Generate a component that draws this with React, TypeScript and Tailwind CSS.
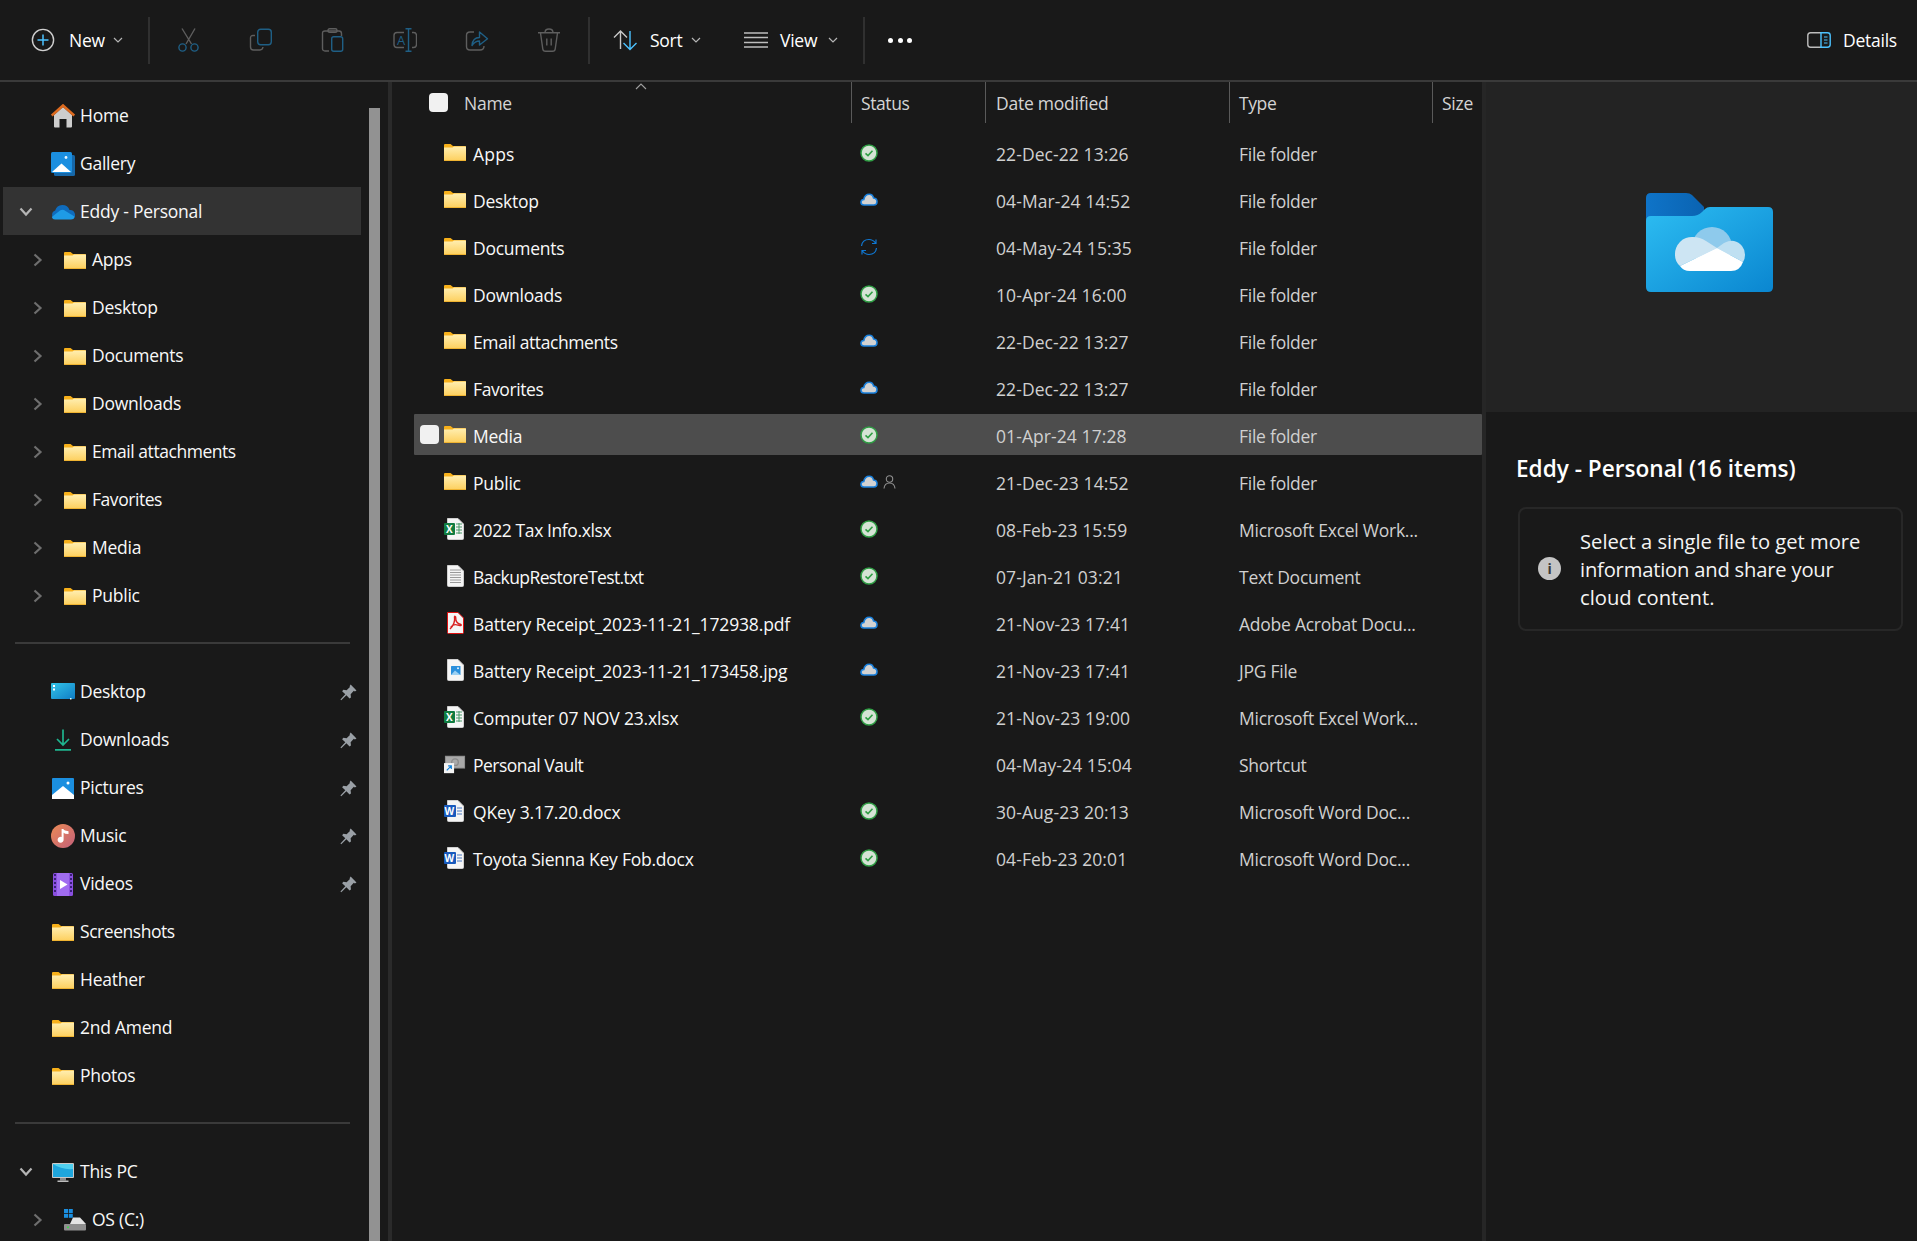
import React from "react";

const BLUE_DIM = "#1f5f85";
const GRAY_DIM = "#5e5e5e";

function Chev({ className = "" }: { className?: string }) {
  return (
    <svg width="10" height="6" viewBox="0 0 10 6" className={className} fill="none" stroke="#b5b5b5" strokeWidth="1.2">
      <path d="M1 1 L5 5 L9 1" />
    </svg>
  );
}

function IconNew() {
  return (
    <svg width="24" height="24" viewBox="0 0 24 24" fill="none">
      <circle cx="12" cy="12" r="10.6" stroke="#cfcfcf" strokeWidth="1.4" />
      <path d="M12 6.5 V17.5 M6.5 12 H17.5" stroke="#4cc2ff" strokeWidth="1.5" />
    </svg>
  );
}
function IconCut() {
  return (
    <svg width="24" height="24" viewBox="0 0 24 24" fill="none" strokeWidth="1.4">
      <path d="M5 0.5 L14.5 16 M18 0.5 L9 16" stroke={GRAY_DIM} />
      <circle cx="5.5" cy="19.5" r="3.6" stroke={BLUE_DIM} />
      <circle cx="17.5" cy="19.5" r="3.6" stroke={BLUE_DIM} />
    </svg>
  );
}
function IconCopy() {
  return (
    <svg width="24" height="24" viewBox="0 0 24 24" fill="none" strokeWidth="1.4">
      <path d="M6 7.5 H4 Q1.5 7.5 1.5 10 V19 Q1.5 22 4.5 22 H11 Q13.5 22 14 19" stroke={GRAY_DIM} />
      <rect x="8.7" y="1.2" width="13.6" height="15.6" rx="3" stroke={BLUE_DIM} />
    </svg>
  );
}
function IconPaste() {
  return (
    <svg width="24" height="24" viewBox="0 0 24 24" fill="none" strokeWidth="1.4">
      <path d="M8 23 H4 Q1.5 23 1.5 20.5 V5.5 Q1.5 3 4 3 H18 Q20.5 3 20.5 5.5 V8" stroke={GRAY_DIM} />
      <rect x="7" y="0.8" width="9" height="3.6" rx="1.6" stroke={GRAY_DIM} />
      <rect x="10.7" y="8.7" width="11" height="14.6" rx="2" stroke={BLUE_DIM} />
    </svg>
  );
}
function IconRename() {
  return (
    <svg width="24" height="24" viewBox="0 0 24 24" fill="none" strokeWidth="1.4">
      <path d="M11 4.5 H4 Q1 4.5 1 7.5 V16.5 Q1 19.5 4 19.5 H11 M19 4.5 H20.5 Q23.5 4.5 23.5 7.5 V16.5 Q23.5 19.5 20.5 19.5 H19" stroke={GRAY_DIM} />
      <path d="M15.5 0.7 V23.3 M12.5 0.7 H18.5 M12.5 23.3 H18.5" stroke={BLUE_DIM} />
      <text x="3.9" y="16.8" fontSize="13" fill={BLUE_DIM} fontFamily="Open Sans, sans-serif">A</text>
    </svg>
  );
}
function IconShare() {
  return (
    <svg width="24" height="24" viewBox="0 0 24 24" fill="none" strokeWidth="1.4">
      <path d="M9 4 H5 Q1.5 4 1.5 7.5 V18.5 Q1.5 22 5 22 H15 Q19 22 19 18" stroke={GRAY_DIM} />
      <path d="M7 17.5 C7.5 11.5 11 9.5 14.5 9.5 V4 L22.5 10.8 L14.5 17 V13 C11.5 13 9 14.5 7 17.5 Z" stroke={BLUE_DIM} strokeLinejoin="round" />
    </svg>
  );
}
function IconDelete() {
  return (
    <svg width="24" height="24" viewBox="0 0 24 24" fill="none" strokeWidth="1.4" stroke={GRAY_DIM}>
      <path d="M1 4.7 H23 M8 4.7 Q8 1 12 1 Q16 1 16 4.7 M3.5 5 L5.8 21 Q6 23.2 8.5 23.2 H15.5 Q18 23.2 18.2 21 L20.5 5" />
      <path d="M9.8 10.5 V17.5 M14.2 10.5 V17.5" />
    </svg>
  );
}
function IconSort() {
  return (
    <svg width="24" height="24" viewBox="0 0 24 24" fill="none" strokeWidth="1.4">
      <path d="M7.5 21 V3 M1 9.5 L7.5 3 L14 9.5" stroke="#c8c8c8" />
      <path d="M17 3 V21.5 M10.5 15 L17 21.5 L23.5 15" stroke="#4cc2ff" />
    </svg>
  );
}
function IconView() {
  return (
    <svg width="24" height="18" viewBox="0 0 24 18" fill="none" strokeWidth="1.6" stroke="#bdbdbd">
      <path d="M0 2 H24 M0 6.5 H24 M0 11.5 H24 M0 16 H24" />
    </svg>
  );
}
function IconDetails() {
  return (
    <svg width="24" height="16" viewBox="0 0 24 16" fill="none" strokeWidth="1.4">
      <path d="M14 0.8 H3.5 Q0.8 0.8 0.8 3.5 V12.5 Q0.8 15.2 3.5 15.2 H14" stroke="#bdbdbd" />
      <path d="M14 0.8 H20.5 Q23.2 0.8 23.2 3.5 V12.5 Q23.2 15.2 20.5 15.2 H14 Z" stroke="#4cc2ff" />
      <path d="M17 5 H20.5 M17 8 H20.5 M17 11 H20.5" stroke="#4cc2ff" strokeWidth="1" />
    </svg>
  );
}

function Folder() {
  return (
    <svg width="22" height="17" viewBox="0 0 22 17">
      <defs>
        <linearGradient id="fy" x1="0" y1="0" x2="0" y2="1">
          <stop offset="0" stopColor="#ffeeb0" />
          <stop offset="1" stopColor="#fdcf5c" />
        </linearGradient>
      </defs>
      <path d="M0 1 Q0 0 1 0 H6.5 L9 2 H21 Q22 2 22 3 V5 H0 Z" fill="#f7b01a" />
      <path d="M0 3.5 H8.5 L10 2.6 H22 V16 Q22 17 21 17 H1 Q0 17 0 16 Z" fill="url(#fy)" />
      <rect x="0" y="16" width="22" height="1" fill="#efb331" />
    </svg>
  );
}
function Page({ children, border = "#cfcfcf" }: { children?: React.ReactNode; border?: string }) {
  return (
    <svg width="22" height="22" viewBox="0 0 22 22">
      <path d="M3.5 0.5 H14 L19.5 6 V20.5 Q19.5 21.5 18.5 21.5 H4.5 Q3.5 21.5 3.5 20.5 Z" fill="#f5f5f5" stroke={border} />
      {children}
    </svg>
  );
}
function Excel() {
  return (
    <Page>
      <path d="M12 6 H18 M12 9 H18 M12 12 H18 M12 15 H18 M15 5 V16" stroke="#4a9b6b" strokeWidth="1" />
      <rect x="0" y="5" width="11" height="12" rx="1" fill="#107c41" />
      <text x="2" y="14.5" fontSize="10" fontWeight="700" fill="#fff" fontFamily="Open Sans, sans-serif">X</text>
    </Page>
  );
}
function Word() {
  return (
    <Page>
      <path d="M13 8 H18 M13 11 H18 M13 14 H18" stroke="#4a78c0" strokeWidth="1" />
      <rect x="0" y="5" width="12" height="12" rx="1" fill="#185abd" />
      <text x="0.6" y="14.5" fontSize="10" fontWeight="700" fill="#fff" fontFamily="Open Sans, sans-serif">W</text>
    </Page>
  );
}
function Txt() {
  return (
    <Page>
      <path d="M6 5 H17 M6 7.5 H17 M6 10 H17 M6 12.5 H17 M6 15 H17 M6 17.5 H17" stroke="#9a9a9a" strokeWidth="1" />
    </Page>
  );
}
function Pdf() {
  return (
    <Page border="#e01010">
      <path d="M6 17 C9 14 11 9 10.5 5.5 C10 3.5 12 4 11.8 6 C11.6 9 13 11.5 17 12.5 C18 13.5 16 14 14 13.2 C11.5 12.3 8.5 13 6.8 15" fill="none" stroke="#d81e1e" strokeWidth="1.3" />
    </Page>
  );
}
function Jpg() {
  return (
    <Page>
      <rect x="7" y="7" width="9.5" height="9" rx="0.5" fill="#2a8fdc" />
      <path d="M7 16 L11 11.5 L16.5 16 Z" fill="#9bd0f3" />
      <circle cx="14" cy="9.3" r="1" fill="#e4f3ff" />
    </Page>
  );
}
function Vault() {
  return (
    <svg width="24" height="20" viewBox="0 0 24 20">
      <rect x="1" y="1" width="22" height="14" fill="#8a8a8a" />
      <rect x="2" y="2" width="20" height="12" fill="#a9a9a9" />
      <circle cx="12" cy="8" r="3.6" fill="none" stroke="#8a8a8a" strokeWidth="1.4" />
      <rect x="0" y="9" width="11" height="11" fill="#f4f4f4" />
      <path d="M3 17 L8 12 M4.5 12 H8 V15.5" stroke="#1280d8" strokeWidth="1.3" fill="none" />
    </svg>
  );
}
function StatusOk() {
  return (
    <svg width="18" height="18" viewBox="0 0 18 18" fill="none">
      <circle cx="9" cy="9" r="8" fill="#d5e3d5" stroke="#2f9e44" strokeWidth="1.5" />
      <path d="M5.5 9.3 L8 11.6 L12.5 6.8" stroke="#2f9e44" strokeWidth="1.6" />
    </svg>
  );
}
function StatusCloud() {
  return (
    <svg width="18" height="13" viewBox="0 0 18 13" fill="none">
      <path d="M4 12 Q1 12 1 9.3 Q1 6.8 3.8 6.5 Q4.8 1.2 9.3 1.2 Q12.6 1.2 13.6 5 Q17 5.4 17 8.7 Q17 12 13.8 12 Z" fill="#d2d2d2" stroke="#1a80dc" strokeWidth="1.6" />
    </svg>
  );
}
function StatusSync() {
  return (
    <svg width="18" height="18" viewBox="0 0 18 18" fill="none" stroke="#0f78d4" strokeWidth="1.2">
      <path d="M1.5 8 C2 4 5 1.5 9 1.5 C12 1.5 14 3 15.5 5 M16 1.5 V5.5 H12" />
      <path d="M16.5 10 C16 14 13 16.5 9 16.5 C6 16.5 4 15 2.5 13 M2 16.5 V12.5 H6" />
    </svg>
  );
}
function Person() {
  return (
    <svg width="13" height="14" viewBox="0 0 13 14" fill="none" stroke="#8f8f8f" strokeWidth="1.1">
      <circle cx="6.5" cy="4" r="3.2" />
      <path d="M1 13.5 Q1.5 8 6.5 8 Q11.5 8 12 13.5" />
    </svg>
  );
}

function NavHome() {
  return (
    <svg width="24" height="24" viewBox="0 0 24 24">
      <path d="M3 11 L12 3 L21 11 V22.5 Q21 23.5 20 23.5 H15.5 V15 H8.5 V23.5 H4 Q3 23.5 3 22.5 Z" fill="#cdcdcd" />
      <path d="M0.7 11.5 L12 1.5 L23.3 11.5" fill="none" stroke="#dd6a1f" strokeWidth="2.6" />
    </svg>
  );
}
function NavGallery() {
  return (
    <svg width="24" height="24" viewBox="0 0 24 24">
      <rect x="3" y="3" width="21" height="21" rx="1.5" fill="#1667a8" />
      <rect x="0" y="0" width="21" height="21" rx="1.5" fill="#1b8fe0" />
      <path d="M1 20 L10.5 11.5 L20 20 Z" fill="#fff" />
      <circle cx="15" cy="5.5" r="1.4" fill="#e8f6ff" />
    </svg>
  );
}
function NavCloud() {
  return (
    <svg width="24" height="16" viewBox="0 0 24 16">
      <path d="M4 15 A4.5 4.5 0 0 1 4.2 6.5 A7.5 7.5 0 0 1 18.5 6 A5 5 0 0 1 22 15 Z" fill="#0f6cbd" />
      <path d="M9 6.5 Q12 5 14.5 7 L23.5 12.5 Q23.3 15.5 20 15.5 H4 Q1.5 15.5 0.8 13 Z" fill="#1e9be6" />
    </svg>
  );
}
function NavDesktop() {
  return (
    <svg width="24" height="18" viewBox="0 0 24 18">
      <defs>
        <linearGradient id="dg" x1="0" y1="0" x2="1" y2="1">
          <stop offset="0" stopColor="#33c4e8" />
          <stop offset="1" stopColor="#0f7cc4" />
        </linearGradient>
      </defs>
      <rect width="24" height="16" y="0" rx="1" fill="url(#dg)" />
      <rect x="2" y="2" width="2" height="2" fill="#fff" />
      <rect x="2" y="5.5" width="2" height="2" fill="#fff" />
      <rect x="19" y="15" width="1.5" height="1.5" fill="#dff" />
    </svg>
  );
}
function NavDownload() {
  return (
    <svg width="18" height="22" viewBox="0 0 18 22" fill="none" stroke="#1fb58f" strokeWidth="1.7">
      <path d="M9 0.5 V16 M3 10 L9 16 L15 10 M1 20.8 H17" />
    </svg>
  );
}
function NavPictures() {
  return (
    <svg width="22" height="21" viewBox="0 0 22 21">
      <rect width="22" height="21" rx="1" fill="#1b8fe0" />
      <path d="M0 21 L0 17 L11 8 L22 17 V21 Z" fill="#fff" />
      <circle cx="16" cy="5" r="1.5" fill="#fff" />
    </svg>
  );
}
function NavMusic() {
  return (
    <svg width="24" height="24" viewBox="0 0 24 24">
      <defs>
        <linearGradient id="mg" x1="0" y1="0" x2="1" y2="1">
          <stop offset="0" stopColor="#ea8a55" />
          <stop offset="1" stopColor="#c3607a" />
        </linearGradient>
      </defs>
      <circle cx="12" cy="12" r="12" fill="url(#mg)" />
      <path d="M12.6 5 V15.5 A3 3 0 1 1 10.6 13 V5 Z" fill="#fff" />
      <path d="M11 5 Q14 7 17.5 7.2 V10 Q14 10 12 8.5 Z" fill="#fff" />
    </svg>
  );
}
function NavVideos() {
  return (
    <svg width="20" height="23" viewBox="0 0 20 23">
      <rect width="20" height="23" rx="1.5" fill="#8a4fe0" />
      <rect x="4" y="0" width="12" height="23" fill="#a06cf0" />
      <path d="M1 2 H3 M1 6 H3 M1 10 H3 M1 14 H3 M1 18 H3 M17 2 H19 M17 6 H19 M17 10 H19 M17 14 H19 M17 18 H19" stroke="#3a1f78" strokeWidth="2" />
      <path d="M7 7 L14.5 11.5 L7 16 Z" fill="#fff" />
    </svg>
  );
}
function NavPC() {
  return (
    <svg width="22" height="19" viewBox="0 0 22 19">
      <rect width="22" height="15" rx="1" fill="#c9c9c9" />
      <rect x="1" y="1" width="20" height="13" fill="#1ea6dd" />
      <path d="M1 1 H21 V6 Q10 7 1 1 Z" fill="#4fd0ef" />
      <rect x="8" y="15" width="6" height="2.5" fill="#8c8c8c" />
      <rect x="5.5" y="17.5" width="11" height="1.5" fill="#bdbdbd" />
    </svg>
  );
}
function NavDrive() {
  return (
    <svg width="22" height="22" viewBox="0 0 22 22">
      <rect x="0" y="0" width="4" height="4" fill="#1b8fe0" />
      <rect x="4.8" y="0" width="4" height="4" fill="#1b8fe0" />
      <rect x="0" y="4.8" width="4" height="4" fill="#1b8fe0" />
      <rect x="4.8" y="4.8" width="4" height="4" fill="#1b8fe0" />
      <path d="M9 8.5 H16 L22 15 H6 Z" fill="#e4e4e4" />
      <rect x="0" y="15" width="22" height="6.5" rx="1" fill="#8f8f8f" />
      <rect x="3" y="17.5" width="2" height="1.6" fill="#3fd64f" />
    </svg>
  );
}
function Pin() {
  return (
    <svg width="17" height="17" viewBox="0 0 16 16" fill="#9aa0a6">
      <path d="M10 0.5 L15.5 6 L14 7 L13 6.4 L10 9.6 L10.3 12.6 L9 13.6 L6 10.6 L1.2 15.4 L0.4 14.6 L5 9.6 L2 6.8 L3.2 5.5 L6.2 5.8 L9.4 2.9 L9 2 Z" />
    </svg>
  );
}
function CloudFolder() {
  return (
    <svg width="127" height="99" viewBox="0 0 127 99">
      <defs>
        <linearGradient id="bf" x1="0" y1="0" x2="1" y2="1">
          <stop offset="0" stopColor="#2dbdf2" />
          <stop offset="1" stopColor="#0a86d0" />
        </linearGradient>
        <linearGradient id="bt" x1="0" y1="0" x2="1" y2="0">
          <stop offset="0" stopColor="#0f74c8" />
          <stop offset="1" stopColor="#0a63b2" />
        </linearGradient>
      </defs>
      <path d="M0 5 Q0 0 5 0 H40 Q44 0 46 2 L58 14 V30 H0 Z" fill="url(#bt)" />
      <path d="M0 28 Q0 23 5 23 H46 Q52 23 56 19 L59 16 Q61 14 64 14 H122 Q127 14 127 19 V94 Q127 99 122 99 H5 Q0 99 0 94 Z" fill="url(#bf)" />
      <circle cx="66" cy="54" r="20" fill="#8ecaec" />
      <path d="M34 73 A14 14 0 0 1 29 62 A17 17 0 0 1 47 44 Q54 44 60 48 L71 55 Z" fill="#cde5f3" />
      <path d="M71 55 L78 50 Q84 47 88 48 A14 14 0 0 1 99 62 Q99 66 97 69 Z" fill="#bfe0f2" />
      <path d="M71 55 L97 69 Q94 78 85 78 H44 Q37 78 34 73 Z" fill="#fff" />
    </svg>
  );
}

type NavItem = { label: string; icon: React.ReactNode; level?: number; chev?: "r" | "d"; pin?: boolean; selected?: boolean };

function NavChevron({ dir }: { dir: "r" | "d" }) {
  return dir === "d" ? (
    <svg width="14" height="10" viewBox="0 0 14 10" fill="none" stroke="#b5b5b5" strokeWidth="2.2"><path d="M1.5 1.5 L7 7.5 L12.5 1.5" /></svg>
  ) : (
    <svg width="10" height="14" viewBox="0 0 10 14" fill="none" stroke="#6e6e6e" strokeWidth="2.2"><path d="M1.5 1.5 L7.5 7 L1.5 12.5" /></svg>
  );
}

function NavRow({ item }: { item: NavItem }) {
  const tight = item.label === "Email attachments" || item.label === "Screenshots" || item.label === "Favorites";
  return (
    <div className={`flex h-[48px] w-[358px] items-center ${item.selected ? "-mt-[1px] mb-[1px] bg-[#333333] pt-[2px]" : ""} ${item.level ? "pl-[23px]" : "pl-[11px]"}`}>
      <span className="flex w-[24px] items-center justify-center">{item.chev && <NavChevron dir={item.chev} />}</span>
      <span className="ml-[13px] flex w-[24px] items-center justify-center">{item.icon}</span>
      <span className={`ml-[5px] flex-1 pb-[1px] text-[#f8f8f8] ${tight ? "tracking-[-0.45px]" : ""}`}>{item.label}</span>
      {item.pin && <span className="mr-[4px] flex"><Pin /></span>}
    </div>
  );
}

const navTop: NavItem[] = [
  { label: "Home", icon: <NavHome /> },
  { label: "Gallery", icon: <NavGallery /> },
  { label: "Eddy - Personal", icon: <NavCloud />, chev: "d", selected: true },
  ...["Apps", "Desktop", "Documents", "Downloads", "Email attachments", "Favorites", "Media", "Public"].map(
    (label) => ({ label, icon: <Folder />, chev: "r" as const, level: 1 })
  ),
];
const navPinned: NavItem[] = [
  { label: "Desktop", icon: <NavDesktop />, pin: true },
  { label: "Downloads", icon: <NavDownload />, pin: true },
  { label: "Pictures", icon: <NavPictures />, pin: true },
  { label: "Music", icon: <NavMusic />, pin: true },
  { label: "Videos", icon: <NavVideos />, pin: true },
  ...["Screenshots", "Heather", "2nd Amend", "Photos"].map((label) => ({ label, icon: <Folder /> })),
];
const navPC: NavItem[] = [
  { label: "This PC", icon: <NavPC />, chev: "d" },
  { label: "OS (C:)", icon: <NavDrive />, chev: "r", level: 1 },
];

type Row = { name: string; icon: React.ReactNode; status: React.ReactNode; date: string; type: string; selected?: boolean; fit?: string };
const F = "File folder";
const X = "Microsoft Excel Work...";
const W = "Microsoft Word Doc...";
const rows: Row[] = [
  { name: "Apps", icon: <Folder />, status: <StatusOk />, date: "22-Dec-22 13:26", type: F, fit: "tracking-[0.2px]" },
  { name: "Desktop", icon: <Folder />, status: <StatusCloud />, date: "04-Mar-24 14:52", type: F },
  { name: "Documents", icon: <Folder />, status: <StatusSync />, date: "04-May-24 15:35", type: F },
  { name: "Downloads", icon: <Folder />, status: <StatusOk />, date: "10-Apr-24 16:00", type: F },
  { name: "Email attachments", icon: <Folder />, status: <StatusCloud />, date: "22-Dec-22 13:27", type: F, fit: "tracking-[-0.4px]" },
  { name: "Favorites", icon: <Folder />, status: <StatusCloud />, date: "22-Dec-22 13:27", type: F, fit: "tracking-[-0.4px]" },
  { name: "Media", icon: <Folder />, status: <StatusOk />, date: "01-Apr-24 17:28", type: F, selected: true },
  { name: "Public", icon: <Folder />, status: <span className="flex items-center gap-[5px]"><StatusCloud /><Person /></span>, date: "21-Dec-23 14:52", type: F },
  { name: "2022 Tax Info.xlsx", icon: <Excel />, status: <StatusOk />, date: "08-Feb-23 15:59", type: X, fit: "tracking-[-0.4px]" },
  { name: "BackupRestoreTest.txt", icon: <Txt />, status: <StatusOk />, date: "07-Jan-21 03:21", type: "Text Document", fit: "tracking-[-0.6px]" },
  { name: "Battery Receipt_2023-11-21_172938.pdf", icon: <Pdf />, status: <StatusCloud />, date: "21-Nov-23 17:41", type: "Adobe Acrobat Docu...", fit: "tracking-[-0.15px]" },
  { name: "Battery Receipt_2023-11-21_173458.jpg", icon: <Jpg />, status: <StatusCloud />, date: "21-Nov-23 17:41", type: "JPG File", fit: "tracking-[-0.15px]" },
  { name: "Computer 07 NOV 23.xlsx", icon: <Excel />, status: <StatusOk />, date: "21-Nov-23 19:00", type: X, fit: "tracking-[-0.15px]" },
  { name: "Personal Vault", icon: <Vault />, status: null, date: "04-May-24 15:04", type: "Shortcut", fit: "tracking-[-0.5px]" },
  { name: "QKey 3.17.20.docx", icon: <Word />, status: <StatusOk />, date: "30-Aug-23 20:13", type: W, fit: "tracking-[-0.15px]" },
  { name: "Toyota Sienna Key Fob.docx", icon: <Word />, status: <StatusOk />, date: "04-Feb-23 20:01", type: W },
];

const GRID = "grid grid-cols-[437px_134px_244px_203px_47px]";

function ToolIcon({ children }: { children: React.ReactNode }) {
  return <span className="flex h-[24px] w-[72px] items-center justify-center">{children}</span>;
}
function ToolSep({ className = "" }: { className?: string }) {
  return <span className={`h-[47px] w-[2px] bg-[#303030] ${className}`} />;
}
function ToolLabel({ className, children }: { className: string; children: React.ReactNode }) {
  return <span className={`${className} pt-[2px]`}>{children}</span>;
}

export default function App() {
  return (
    <div className="flex h-[1241px] w-[1917px] flex-col overflow-hidden bg-[#191919] font-['Open_Sans',sans-serif] text-[17.5px] leading-none tracking-[-0.25px] text-white">
      <div className="flex h-[80px] items-center pl-[31px] pr-[20px]">
        <IconNew />
        <ToolLabel className="ml-[14px] w-[36px]">New</ToolLabel>
        <Chev className="ml-[8px]" />
        <ToolSep className="ml-[25px]" />
        <div className="ml-[3px] flex">
          <ToolIcon><IconCut /></ToolIcon>
          <ToolIcon><IconCopy /></ToolIcon>
          <ToolIcon><IconPaste /></ToolIcon>
          <ToolIcon><IconRename /></ToolIcon>
          <ToolIcon><IconShare /></ToolIcon>
          <ToolIcon><IconDelete /></ToolIcon>
        </div>
        <ToolSep className="ml-[3px]" />
        <span className="ml-[23px] flex"><IconSort /></span>
        <ToolLabel className="ml-[13px] w-[36px]">Sort</ToolLabel>
        <Chev className="ml-[5px]" />
        <span className="ml-[43px] flex"><IconView /></span>
        <ToolLabel className="ml-[12px] w-[38px]">View</ToolLabel>
        <Chev className="ml-[10px]" />
        <ToolSep className="ml-[25px]" />
        <span className="ml-[23px] flex gap-[4.5px]">
          <span className="h-[5px] w-[5px] rounded-full bg-white" />
          <span className="h-[5px] w-[5px] rounded-full bg-white" />
          <span className="h-[5px] w-[5px] rounded-full bg-white" />
        </span>
        <span className="ml-auto flex"><IconDetails /></span>
        <ToolLabel className="ml-[12px] w-[54px]">Details</ToolLabel>
      </div>
      <div className="h-[2px] bg-[#3a3a3a]" />

      <div className="flex min-h-0 flex-1">
        <div className="flex w-[388px]">
          <div className="w-[369px] pl-[3px] pt-[10px]">
            {navTop.map((n, i) => <NavRow key={i} item={n} />)}
            <div className="flex h-[48px] items-center pb-[3px] pl-[12px]"><div className="h-[2px] w-[335px] bg-[#3a3a3a]" /></div>
            {navPinned.map((n, i) => <NavRow key={i} item={n} />)}
            <div className="flex h-[48px] items-center pb-[2px] pl-[12px]"><div className="h-[2px] w-[335px] bg-[#3a3a3a]" /></div>
            {navPC.map((n, i) => <NavRow key={i} item={n} />)}
          </div>
          <div className="mt-[26px] w-[11px] bg-[#929292]" />
        </div>
        <div className="w-[4px] bg-[#2a2a2a]" />

        <div className="w-[1090px] pl-[22px]">
          <div className={`${GRID} h-[41px] items-stretch text-[#d4d4d4]`}>
            <div className="relative flex items-center pl-[15px]">
              <span className="h-[19px] w-[19px] rounded-[4px] bg-[#f1f1f1]" />
              <span className="ml-[16px] pt-[2px]">Name</span>
              <svg width="12" height="7" viewBox="0 0 12 7" fill="none" stroke="#a0a0a0" strokeWidth="1.1" className="absolute left-[221px] top-[1px]"><path d="M1 6 L6 1 L11 6" /></svg>
            </div>
            <div className="flex items-center border-l border-[#5a5a5a] pl-[9px] pt-[2px] tracking-[-0.4px]">Status</div>
            <div className="flex items-center border-l border-[#5a5a5a] pl-[10px] pt-[2px]">Date modified</div>
            <div className="flex items-center border-l border-[#5a5a5a] pl-[9px] pt-[2px] tracking-[-0.4px]">Type</div>
            <div className="flex items-center border-l border-[#5a5a5a] pl-[9px] pt-[2px]">Size</div>
          </div>
          <div className="flex flex-col gap-[6px] pt-[9px]">
            {rows.map((r) => (
              <div key={r.name} className={`${GRID} h-[41px] items-center rounded-[1px] ${r.selected ? "bg-[#4d4d4d]" : ""}`}>
                <div className="flex items-center">
                  <span className="flex w-[30px] justify-end pr-[5px]">
                    {r.selected && <span className="h-[19px] w-[19px] rounded-[4px] bg-[#f1f1f1]" />}
                  </span>
                  <span className="flex w-[22px] items-center justify-center">{r.icon}</span>
                  <span className={`ml-[7px] pt-[5px] text-[#f8f8f8] ${r.fit ?? ""}`}>{r.name}</span>
                </div>
                <div className="flex items-center pl-[9px]">{r.status}</div>
                <div className="pl-[11px] pt-[5px] tracking-[0.08px] text-[#d0d0d0]">{r.date}</div>
                <div className="pl-[10px] pt-[5px] text-[#d0d0d0]">{r.type}</div>
                <div />
              </div>
            ))}
          </div>
        </div>
        <div className="w-[4px] bg-[#262626]" />

        <div className="flex-1">
          <div className="flex h-[330px] items-center justify-center bg-[#232323] pb-[9px] pl-[16px]">
            <CloudFolder />
          </div>
          <div className="pl-[30px] pt-[46px] text-[22.6px] font-semibold tracking-normal text-white">Eddy - Personal (16 items)</div>
          <div className="ml-[32px] mt-[26px] flex h-[124px] w-[385px] items-center rounded-[8px] border-2 border-[#272727]">
            <span className="ml-[18px] flex h-[23px] w-[23px] items-center justify-center rounded-full bg-[#c4c4c4] text-[14px] font-bold text-[#3a3a3a]">i</span>
            <div className="ml-[19px] text-[20.2px] leading-[28px] tracking-normal text-[#f4f4f4]">
              Select a single file to get more<br /><span className="tracking-[-0.2px]">information and share your</span><br />cloud content.
            </div>
          </div>
        </div>
      </div>
    </div>
  );
}
